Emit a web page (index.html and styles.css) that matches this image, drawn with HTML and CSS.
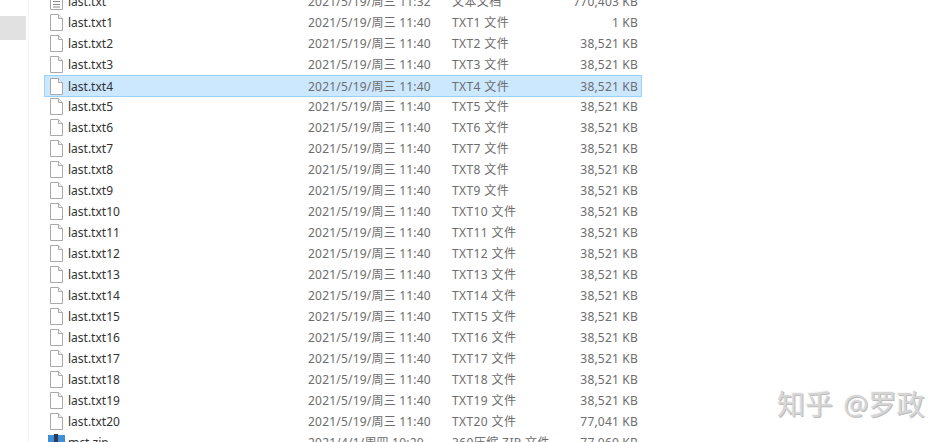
FILE: index.html
```html
<!DOCTYPE html>
<html lang="en">
<head>
  <meta charset="UTF-8" />
  <title>Files</title>
  <link rel="stylesheet" href="styles.css">
</head>
<body>
  <svg class="defs" width="0" height="0">
    <symbol id="file" viewBox="0 0 13 17">
      <path d="M.5.5h8l4 4v12H.5z" fill="#fff" stroke="#a9a9a9"/>
      <path d="M8.5.5v4h4" fill="#f2f2f2" stroke="#a9a9a9"/>
    </symbol>
    <symbol id="textfile" viewBox="0 0 13 17">
      <path d="M.5.5h12v16H.5z" fill="#fff" stroke="#a9a9a9"/>
      <path d="M3 5.5h7M3 8.5h7M3 11.5h7M3 14h7" stroke="#8a8a8a"/>
    </symbol>
    <symbol id="zip" viewBox="0 0 17 17">
      <path d="M0 1h17v16H0z" fill="#3f8fd8"/>
      <path d="M6 0h4v17H6z" fill="#2b3a55"/>
    </symbol>
  </svg>

  <div class="page">
    <aside class="side">
      <div class="side-item"></div>
    </aside>

    <main class="list">
      <div class="row">
        <svg class="icon"><use href="#textfile"/></svg>
        <span class="name">last.txt</span>
        <span class="date">2021/5/19/周三 11:32</span>
        <span class="type">文本文档</span>
        <span class="size">770,403 KB</span>
      </div>
      <div class="row">
        <svg class="icon"><use href="#file"/></svg>
        <span class="name">last.txt1</span>
        <span class="date">2021/5/19/周三 11:40</span>
        <span class="type">TXT1 文件</span>
        <span class="size">1 KB</span>
      </div>
      <div class="row">
        <svg class="icon"><use href="#file"/></svg>
        <span class="name">last.txt2</span>
        <span class="date">2021/5/19/周三 11:40</span>
        <span class="type">TXT2 文件</span>
        <span class="size">38,521 KB</span>
      </div>
      <div class="row">
        <svg class="icon"><use href="#file"/></svg>
        <span class="name">last.txt3</span>
        <span class="date">2021/5/19/周三 11:40</span>
        <span class="type">TXT3 文件</span>
        <span class="size">38,521 KB</span>
      </div>
      <div class="row selected">
        <svg class="icon"><use href="#file"/></svg>
        <span class="name">last.txt4</span>
        <span class="date">2021/5/19/周三 11:40</span>
        <span class="type">TXT4 文件</span>
        <span class="size">38,521 KB</span>
      </div>
      <div class="row">
        <svg class="icon"><use href="#file"/></svg>
        <span class="name">last.txt5</span>
        <span class="date">2021/5/19/周三 11:40</span>
        <span class="type">TXT5 文件</span>
        <span class="size">38,521 KB</span>
      </div>
      <div class="row">
        <svg class="icon"><use href="#file"/></svg>
        <span class="name">last.txt6</span>
        <span class="date">2021/5/19/周三 11:40</span>
        <span class="type">TXT6 文件</span>
        <span class="size">38,521 KB</span>
      </div>
      <div class="row">
        <svg class="icon"><use href="#file"/></svg>
        <span class="name">last.txt7</span>
        <span class="date">2021/5/19/周三 11:40</span>
        <span class="type">TXT7 文件</span>
        <span class="size">38,521 KB</span>
      </div>
      <div class="row">
        <svg class="icon"><use href="#file"/></svg>
        <span class="name">last.txt8</span>
        <span class="date">2021/5/19/周三 11:40</span>
        <span class="type">TXT8 文件</span>
        <span class="size">38,521 KB</span>
      </div>
      <div class="row">
        <svg class="icon"><use href="#file"/></svg>
        <span class="name">last.txt9</span>
        <span class="date">2021/5/19/周三 11:40</span>
        <span class="type">TXT9 文件</span>
        <span class="size">38,521 KB</span>
      </div>
      <div class="row">
        <svg class="icon"><use href="#file"/></svg>
        <span class="name">last.txt10</span>
        <span class="date">2021/5/19/周三 11:40</span>
        <span class="type">TXT10 文件</span>
        <span class="size">38,521 KB</span>
      </div>
      <div class="row">
        <svg class="icon"><use href="#file"/></svg>
        <span class="name">last.txt11</span>
        <span class="date">2021/5/19/周三 11:40</span>
        <span class="type">TXT11 文件</span>
        <span class="size">38,521 KB</span>
      </div>
      <div class="row">
        <svg class="icon"><use href="#file"/></svg>
        <span class="name">last.txt12</span>
        <span class="date">2021/5/19/周三 11:40</span>
        <span class="type">TXT12 文件</span>
        <span class="size">38,521 KB</span>
      </div>
      <div class="row">
        <svg class="icon"><use href="#file"/></svg>
        <span class="name">last.txt13</span>
        <span class="date">2021/5/19/周三 11:40</span>
        <span class="type">TXT13 文件</span>
        <span class="size">38,521 KB</span>
      </div>
      <div class="row">
        <svg class="icon"><use href="#file"/></svg>
        <span class="name">last.txt14</span>
        <span class="date">2021/5/19/周三 11:40</span>
        <span class="type">TXT14 文件</span>
        <span class="size">38,521 KB</span>
      </div>
      <div class="row">
        <svg class="icon"><use href="#file"/></svg>
        <span class="name">last.txt15</span>
        <span class="date">2021/5/19/周三 11:40</span>
        <span class="type">TXT15 文件</span>
        <span class="size">38,521 KB</span>
      </div>
      <div class="row">
        <svg class="icon"><use href="#file"/></svg>
        <span class="name">last.txt16</span>
        <span class="date">2021/5/19/周三 11:40</span>
        <span class="type">TXT16 文件</span>
        <span class="size">38,521 KB</span>
      </div>
      <div class="row">
        <svg class="icon"><use href="#file"/></svg>
        <span class="name">last.txt17</span>
        <span class="date">2021/5/19/周三 11:40</span>
        <span class="type">TXT17 文件</span>
        <span class="size">38,521 KB</span>
      </div>
      <div class="row">
        <svg class="icon"><use href="#file"/></svg>
        <span class="name">last.txt18</span>
        <span class="date">2021/5/19/周三 11:40</span>
        <span class="type">TXT18 文件</span>
        <span class="size">38,521 KB</span>
      </div>
      <div class="row">
        <svg class="icon"><use href="#file"/></svg>
        <span class="name">last.txt19</span>
        <span class="date">2021/5/19/周三 11:40</span>
        <span class="type">TXT19 文件</span>
        <span class="size">38,521 KB</span>
      </div>
      <div class="row">
        <svg class="icon"><use href="#file"/></svg>
        <span class="name">last.txt20</span>
        <span class="date">2021/5/19/周三 11:40</span>
        <span class="type">TXT20 文件</span>
        <span class="size">77,041 KB</span>
      </div>
      <div class="row">
        <svg class="icon icon-zip"><use href="#zip"/></svg>
        <span class="name">mct.zip</span>
        <span class="date">2021/4/1/周四 10:20</span>
        <span class="type">360压缩 ZIP 文件</span>
        <span class="size">77,060 KB</span>
      </div>
    </main>
  </div>

  <div class="watermark">知乎 @罗政</div>
</body>
</html>
```

FILE: styles.css
```css
* {
  margin: 0;
  padding: 0;
  box-sizing: border-box;
}

html, body {
  height: 100%;
  overflow: hidden;
}

body {
  background-color: #fff;
  color: #333;
  font-family: "Noto Sans", "Noto Sans CJK SC", sans-serif;
  font-size: 12px;
}

.defs {
  position: absolute;
}

.page {
  display: flex;
  height: 442px;
  overflow: hidden;
}

.side {
  width: 29px;
  padding-top: 16px;
  border-right: 1px solid #f3f3f3;
  flex-shrink: 0;
}

.side-item {
  width: 26px;
  height: 24px;
  background-color: #e1e1e1;
}

.list {
  width: 598px;
  margin-left: 15px;
  margin-top: -9px;
}

.row {
  display: grid;
  grid-template-columns: 18px 240px 144px 1fr 84px;
  align-items: center;
  height: 21px;
  padding: 0 4px 0 6px;
  line-height: 21px;
  white-space: nowrap;
}

.row.selected {
  height: 22px;
  margin-bottom: -1px;
  background-color: #cce8ff;
  border: 1px solid #99d1ff;
  padding: 0 3px 0 5px;
}

.icon {
  width: 13px;
  height: 17px;
}

.icon-zip {
  width: 17px;
  margin-left: -2px;
}

.date, .type, .size {
  color: #6d6d6d;
}

.date {
  letter-spacing: 0.2px;
}

.type {
  letter-spacing: 0.4px;
}

.size {
  text-align: right;
  letter-spacing: 0.2px;
}

.watermark {
  position: absolute;
  left: 777px;
  top: 385px;
  font-size: 28px;
  line-height: 38px;
  word-spacing: 3px;
  color: #d6d6d6;
  text-shadow: 1px 1px 0 #bcbcbc, -1px -1px 0 #f6f6f6;
  white-space: nowrap;
}
```
